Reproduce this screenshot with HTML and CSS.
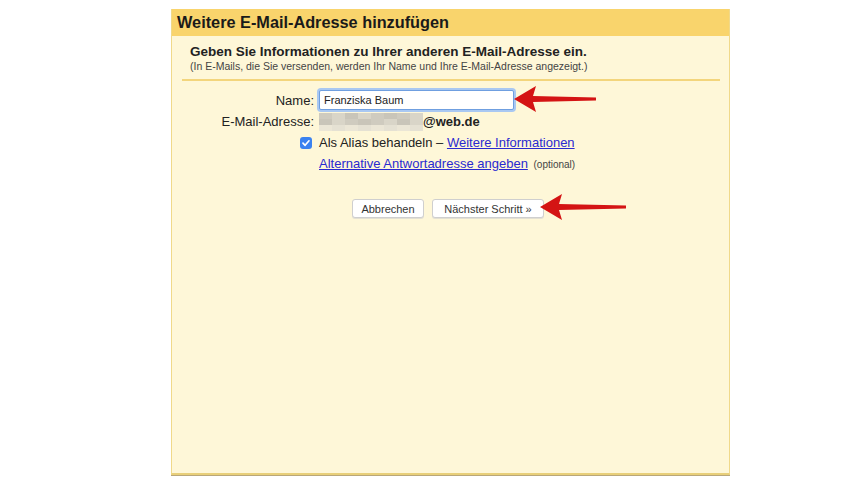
FILE: index.html
```html
<!DOCTYPE html>
<html lang="de">
<head>
<meta charset="utf-8">
<title>Weitere E-Mail-Adresse hinzufügen</title>
<link rel="stylesheet" href="styles.css">
</head>
<body>
<div class="stage">
  <div class="panel">
    <div class="head">Weitere E-Mail-Adresse hinzufügen</div>
    <div class="body">
      <div class="intro">
        <div class="lead">Geben Sie Informationen zu Ihrer anderen E-Mail-Adresse ein.</div>
        <div class="note">(In E-Mails, die Sie versenden, werden Ihr Name und Ihre E-Mail-Adresse angezeigt.)</div>
      </div>
      <div class="sep"></div>
      <div class="form">
        <div class="row r1">
          <div class="lab">Name:</div>
          <div class="val"><div class="input">Franziska Baum</div></div>
        </div>
        <div class="row">
          <div class="lab">E-Mail-Adresse:</div>
          <div class="val"><span class="blur"><i></i><i></i><i></i><i></i><i></i><i></i><i></i><i></i><i></i><i></i><i></i><i></i><i></i><i></i><i></i><i></i><i></i><i></i><i></i><i></i><i></i><i></i><i></i><i></i></span><b class="dom">@web.de</b></div>
        </div>
        <div class="row chk">
          <div class="lab"><span class="box"><svg viewBox="0 0 12 12" width="12" height="12"><path d="M3 6.2 L5.1 8.3 L9 3.8" fill="none" stroke="#fff" stroke-width="1.7" stroke-linecap="round" stroke-linejoin="round"/></svg></span></div>
          <div class="val"><span class="txt">Als Alias behandeln – <a href="#">Weitere Informationen</a></span></div>
        </div>
        <div class="row alt">
          <div class="lab"></div>
          <div class="val"><span class="txt"><a href="#">Alternative Antwortadresse angeben</a> <span class="opt">(optional)</span></span></div>
        </div>
      </div>
      <div class="buttons">
        <button class="btn b1">Abbrechen</button>
        <button class="btn b2">Nächster Schritt »</button>
      </div>
    </div>
  </div>
  <svg class="arrow a1" width="90" height="30" viewBox="0 0 90 30"><path d="M0 15 L22 2 L19 12 L82 13.5 L82 16.5 L19 18 L22 28 Z" fill="#d41414"/></svg>
  <svg class="arrow a2" width="90" height="30" viewBox="0 0 90 30"><path d="M0 15 L22 2 L19 12 L86 13.5 L86 16.5 L19 18 L22 28 Z" fill="#d41414"/></svg>
</div>
</body>
</html>
```
FILE: styles.css
```css
html, body {
  margin: 0;
  padding: 0;
  background: #ffffff;
}
body {
  font-family: "Liberation Sans", Arial, Helvetica, sans-serif;
  color: #222;
  width: 864px;
  height: 486px;
  overflow: hidden;
}
.stage {
  position: relative;
  width: 864px;
  height: 486px;
  padding-top: 9px;
  box-sizing: border-box;
}
.panel {
  margin-left: 171px;
  width: 559px;
  height: 466px;
  display: flex;
  flex-direction: column;
  box-sizing: border-box;
  border-left: 1px solid #f0d98a;
  border-right: 1px solid #f0d98a;
  border-bottom: 2px solid #e8cf7a;
  box-shadow: 0 1px 0 #b9a77a;
  background: #fef7d8;
}
.head {
  height: 27px;
  background: #f9d46c;
  font-weight: bold;
  font-size: 16.3px;
  line-height: 27px;
  padding-left: 5px;
  color: #1a1a1a;
  flex: none;
}
.body {
  flex: 1;
  padding: 0 9px 0 10px;
}
.intro {
  padding: 8px 0 0 8px;
}
.lead {
  font-weight: bold;
  font-size: 13.5px;
  line-height: 16px;
  color: #222;
}
.note {
  font-size: 10.5px;
  line-height: 12px;
  color: #444;
}
.sep {
  margin-top: 7px;
  height: 2px;
  background: #f3d57c;
}
.form {
  margin-top: 8px;
  display: flex;
  flex-direction: column;
}
.row {
  display: flex;
  align-items: center;
  font-size: 13px;
  height: 21px;
}
.row.r1 {
  height: 22px;
}
.lab {
  width: 132px;
  text-align: right;
  flex: none;
  color: #222;
  display: flex;
  justify-content: flex-end;
}
.val {
  padding-left: 5px;
  display: flex;
  align-items: center;
  white-space: nowrap;
}
.input {
  width: 189px;
  height: 18px;
  border: 1px solid #6f9fe0;
  box-shadow: 0 0 0 2px #a9c8f2;
  border-radius: 2px;
  background: #fff;
  font-size: 11px;
  line-height: 18px;
  padding-left: 4px;
  color: #222;
}
.blur {
  display: grid;
  grid-template-columns: repeat(8, 13px);
  grid-template-rows: repeat(3, 6px);
  width: 104px;
  height: 18px;
}
.blur i:nth-child(odd) { background: #cfcbbf; }
.blur i:nth-child(even) { background: #d9d5c8; }
.blur i:nth-child(3n) { background: #c9c5b9; }
.blur i:nth-child(n+17) { background: #e5e1d3; }
.blur i:nth-child(n+17):nth-child(odd) { background: #ebe6d6; }
.dom {
  font-weight: bold;
  color: #222;
}
.chk .lab {
  padding-right: 2px;
  box-sizing: border-box;
}
.box {
  width: 12px;
  height: 12px;
  border-radius: 3px;
  background: #3b82f0;
  display: flex;
}
a {
  color: #2a2ad0;
  text-decoration: underline;
}
.opt {
  font-size: 10px;
  color: #444;
  margin-left: 2px;
}
.buttons {
  margin-top: 25px;
  display: flex;
  gap: 8px;
  padding-left: 170px;
}
.btn {
  font-family: "Liberation Sans", Arial, sans-serif;
  font-size: 11px;
  height: 19px;
  padding: 0 7px;
  background: #ffffff;
  border: 1px solid #cfcfcf;
  border-radius: 3px;
  color: #333;
  box-shadow: 0 1px 0 #e3e0d3;
}
.b1 { width: 72px; }
.b2 { width: 112px; }
.arrow {
  position: absolute;
}
.a1 { left: 514px; top: 84px; }
.a2 { left: 540px; top: 192px; }
```
